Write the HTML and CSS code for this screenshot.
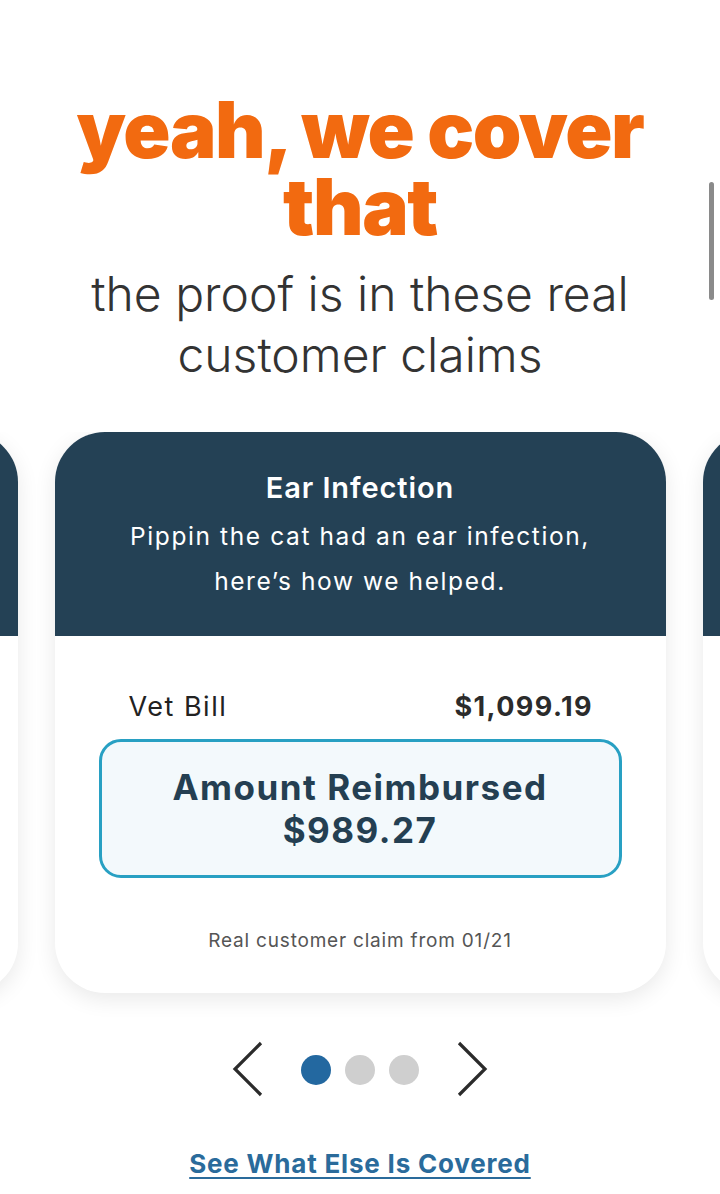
FILE: index.html
```html
<!DOCTYPE html>
<html>
<head>
<meta charset="utf-8">
<link rel="stylesheet" href="styles.css">
</head>
<body>
<div class="scrollbar"></div>
<section class="intro">
  <h1 class="headline">yeah, we cover<br>that</h1>
  <p class="sub">the proof is in these real<br>customer claims</p>
</section>
<section class="carousel">
  <div class="track">
    <div class="card side">
      <div class="card-head"></div>
      <div class="card-body"></div>
    </div>
    <div class="card">
      <div class="card-head">
        <div class="card-title">Ear Infection</div>
        <div class="card-desc">Pippin the cat had an ear infection,<br>here’s how we helped.</div>
      </div>
      <div class="card-body">
        <div class="bill"><span>Vet Bill</span><span class="bill-amt">$1,099.19</span></div>
        <div class="reimb"><div>Amount Reimbursed</div><div>$989.27</div></div>
        <div class="note">Real customer claim from 01/21</div>
      </div>
    </div>
    <div class="card side">
      <div class="card-head"></div>
      <div class="card-body"></div>
    </div>
  </div>
</section>
<nav class="pager">
  <svg class="chev" width="34" height="60" viewBox="0 0 34 60"><path d="M30 3 L4 29 L30 55" fill="none" stroke="#2b2b2b" stroke-width="3.2"/></svg>
  <div class="dots"><span class="dot active"></span><span class="dot"></span><span class="dot"></span></div>
  <svg class="chev" width="34" height="60" viewBox="0 0 34 60"><path d="M4 3 L30 29 L4 55" fill="none" stroke="#2b2b2b" stroke-width="3.2"/></svg>
</nav>
<div class="more"><a href="#">See What Else Is Covered</a></div>
</body>
</html>
```
FILE: styles.css
```css
html, body {
  margin: 0;
  padding: 0;
  background: #fff;
  font-family: Inter, "Liberation Sans", sans-serif;
  overflow: hidden;
}
.scrollbar {
  position: absolute;
  left: 709px;
  top: 182px;
  width: 5px;
  height: 118px;
  border-radius: 3px;
  background: #8a8a8a;
}
.intro {
  text-align: center;
  padding-top: 91px;
}
.headline {
  margin: 0;
  color: #f26a10;
  font-weight: 900;
  font-size: 78px;
  line-height: 77px;
  letter-spacing: -1.5px;
}
.sub {
  margin: 18px 0 0;
  color: #333;
  font-weight: 300;
  font-size: 48px;
  line-height: 61px;
}
.carousel {
  margin-top: 47px;
  overflow: hidden;
  padding-bottom: 40px;
}
.track {
  display: flex;
  justify-content: center;
  gap: 37px;
}
.card {
  flex: 0 0 611px;
  border-radius: 50px;
  overflow: hidden;
  background: #fff;
  box-shadow: 0 6px 22px rgba(0,0,0,0.09);
  height: 561px;
  display: flex;
  flex-direction: column;
}
.card-head {
  background: #244155;
  color: #fff;
  text-align: center;
  height: 204px;
  flex: 0 0 204px;
  box-sizing: border-box;
  padding-top: 38px;
}
.card-title {
  font-weight: 600;
  font-size: 29px;
  line-height: 36px;
  letter-spacing: 0.9px;
}
.card-desc {
  margin-top: 8px;
  font-size: 24.5px;
  line-height: 45px;
  letter-spacing: 1.6px;
}
.card-body {
  padding: 51px 44px 0;
  display: flex;
  flex-direction: column;
}
.bill {
  display: flex;
  justify-content: space-between;
  padding: 0 30px;
  font-size: 27px;
  line-height: 40px;
  color: #222;
  letter-spacing: 1.5px;
}
.bill-amt {
  font-weight: 700;
  color: #2b2b2b;
  letter-spacing: 1.4px;
  margin-right: -1.4px;
}
.reimb {
  margin-top: 12px;
  border: 3px solid #28a0c3;
  border-radius: 22px;
  background: #f3f9fc;
  height: 139px;
  box-sizing: border-box;
  display: flex;
  flex-direction: column;
  justify-content: center;
  align-items: center;
  color: #243f52;
  font-weight: 700;
  font-size: 35px;
  line-height: 43px;
  letter-spacing: 1.5px;
}
.note {
  margin-top: 51px;
  text-align: center;
  color: #555;
  font-size: 19px;
  letter-spacing: 0.8px;
}
.pager {
  display: flex;
  justify-content: center;
  align-items: center;
  gap: 36px;
  margin-top: 7px;
}
.dots {
  display: flex;
  gap: 14px;
}
.dot {
  width: 30px;
  height: 30px;
  border-radius: 50%;
  background: #cfcfcf;
}
.dot.active {
  background: #2368a0;
}
.more {
  text-align: center;
  margin-top: 48px;
}
.more a {
  color: #2a6b9b;
  font-weight: 700;
  font-size: 26px;
  letter-spacing: 0.8px;
  text-decoration: underline;
  text-decoration-thickness: 2px;
  text-underline-offset: 4px;
}
```
